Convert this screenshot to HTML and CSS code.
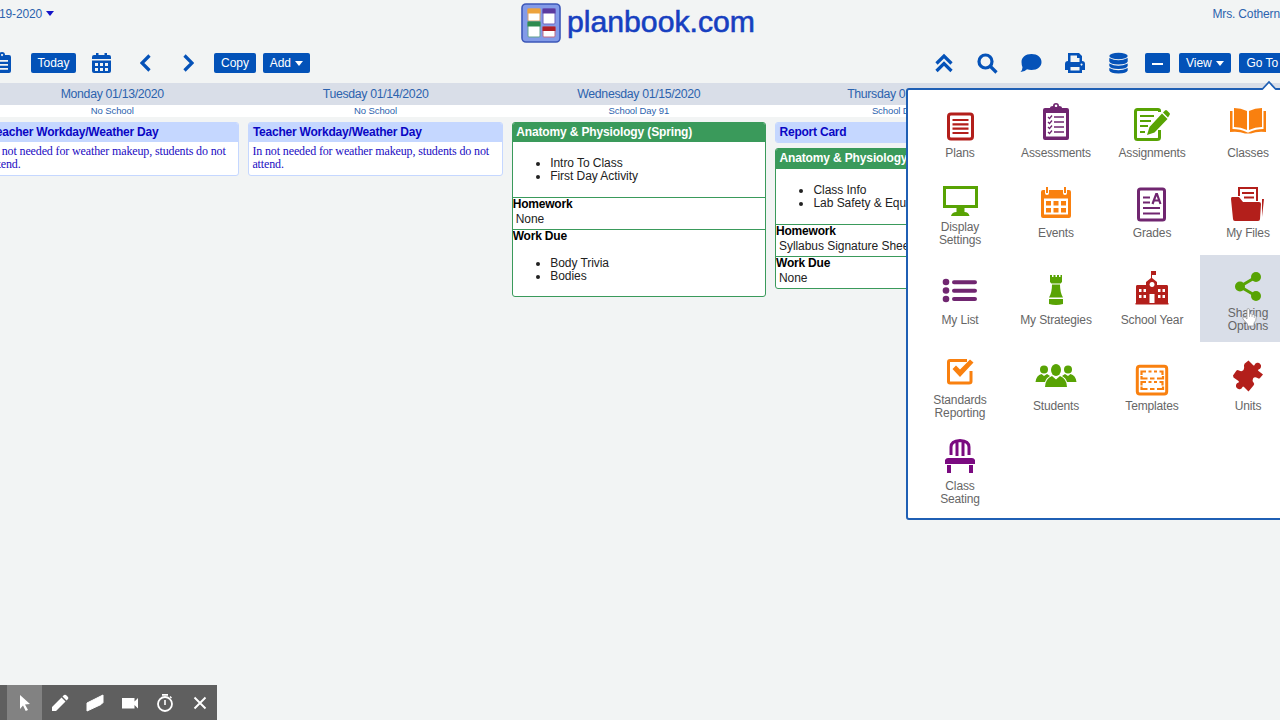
FILE: index.html
```html
<!DOCTYPE html>
<html lang="en">
<head>
    <meta charset="UTF-8">
    <meta name="viewport" content="width=device-width, initial-scale=1.0">
    <title>Planbook</title>
    <link rel="stylesheet" href="styles.css">
</head>
<body>
    <div class="page">
        <header class="header">
            <div class="year">2019-2020 <span class="caret"></span></div>
            <div class="logo">
                <svg width="40" height="40" viewBox="0 0 40 40">
                    <rect x="1" y="1" width="38" height="38" rx="4" fill="#839be8" stroke="#3d57b8" stroke-width="1.600"/>
                    <rect x="7" y="6" width="12" height="12" rx="1" fill="#fff" stroke="#d9a26a"/><path d="M6.500 5.500h13v5h-13z" fill="#eda33c"/>
                    <rect x="22" y="6" width="12" height="15" rx="1" fill="#fff" stroke="#7162bd"/><path d="M21.500 5.500h13v5h-13z" fill="#5b3aa0"/>
                    <rect x="7" y="19" width="12" height="15" rx="1" fill="#fff" stroke="#65a390"/><path d="M6.500 18.500h13v5h-13z" fill="#2f8c4f"/>
                    <rect x="22" y="24" width="12" height="10" rx="1" fill="#fff" stroke="#c56a83"/><path d="M21.500 23.500h13v4.500h-13z" fill="#b02027"/>
                </svg>
                <span class="logo-text">planbook.com</span>
            </div>
            <div class="user">Mrs. Cothern</div>
        </header>

        <nav class="toolbar">
            <svg class="tool clipboard" width="18" height="22" viewBox="0 0 18 22"><path fill-rule="evenodd" d="M2 3h4a3 3 0 0 1 6 0h4q2 0 2 2v14q0 2-2 2H2q-2 0-2-2V5q0-2 2-2zM9 2a1 1 0 1 0 .1 0zM4 8v1.700h11V8zM4 12v1.700h11V12zM4 16v1.700h11V16z"/></svg>
            <button class="btn today">Today</button>
            <svg class="tool calendar" width="19" height="22" viewBox="0 0 19 22"><path fill-rule="evenodd" d="M2 3h2V1h2.500v2h6V1H15v2h2q2 0 2 2v2H0V5q0-2 2-2zM0 8.500h19V19q0 2-2 2H2q-2 0-2-2zM3 11v3h3v-3zm5 0v3h3v-3zm5 0v3h3v-3zM3 16v3h3v-3zm5 0v3h3v-3zm5 0v3h3v-3z"/></svg>
            <svg class="tool prev" width="11" height="18" viewBox="0 0 11 18"><path class="line" d="M9.500 1.500L2 9l7.500 7.500"/></svg>
            <svg class="tool next" width="11" height="18" viewBox="0 0 11 18"><path class="line" d="M1.500 1.500L9 9l-7.500 7.500"/></svg>
            <button class="btn copy">Copy</button>
            <button class="btn add">Add <span class="caret"></span></button>

            <svg class="tool collapse" width="18" height="20" viewBox="0 0 18 20"><path class="line" d="M1.500 10.500L9 3l7.500 7.500M1.500 18L9 10.500l7.500 7.500"/></svg>
            <svg class="tool search" width="21" height="21" viewBox="0 0 21 21"><circle class="line" cx="8.500" cy="8.500" r="6.500"/><path class="line" d="M13.500 13.500l6 6"/></svg>
            <svg class="tool comment" width="22" height="20" viewBox="0 0 22 20"><path d="M11.500 1C17.500 1 21.500 4.500 21.500 9s-4 8-10 8q-2.500 0-4.500-.8Q4.500 19 .5 19q2-2.200 2-4.800Q1.500 12 1.500 9C1.500 4.500 5.500 1 11.500 1z"/></svg>
            <svg class="tool print" width="20" height="22" viewBox="0 0 20 22"><path fill-rule="evenodd" d="M3 1h11l3 3v5q3 0 3 3v6h-3v3H3v-3H0v-6q0-3 3-3zM5.500 3.500V10h9V6H12V3.500zM5.500 15v3.500h9V15zM16.500 11.500a1 1 0 1 0 .1 0z"/></svg>
            <svg class="tool database" width="19" height="22" viewBox="0 0 19 22"><ellipse cx="9.500" cy="4" rx="9.200" ry="3.300"/><path d="M.3 6q9 4.500 18.400 0v3.500q-1 3-9.200 3t-9.200-3zM.3 11.500q9 4.500 18.400 0V14q-1 3-9.200 3t-9.200-3zM.3 16q9 4.500 18.400 0v2.500q-1 3-9.200 3t-9.200-3z"/></svg>
            <button class="btn minus"><span class="dash"></span></button>
            <button class="btn view">View <span class="caret"></span></button>
            <button class="btn goto">Go To <span class="caret"></span></button>
        </nav>

        <main class="week">
            <section class="day">
                <h2 class="date">Monday 01/13/2020</h2>
                <p class="school-day">No School</p>
                <div class="cards">
                    <article class="card event">
                        <h3>Teacher Workday/Weather Day</h3>
                        <p>In not needed for weather makeup, students do not attend.</p>
                    </article>
                </div>
            </section>
            <section class="day">
                <h2 class="date">Tuesday 01/14/2020</h2>
                <p class="school-day">No School</p>
                <div class="cards">
                    <article class="card event">
                        <h3>Teacher Workday/Weather Day</h3>
                        <p>In not needed for weather makeup, students do not attend.</p>
                    </article>
                </div>
            </section>
            <section class="day">
                <h2 class="date">Wednesday 01/15/2020</h2>
                <p class="school-day">School Day 91</p>
                <div class="cards">
                    <article class="card lesson">
                        <h3>Anatomy &amp; Physiology (Spring)</h3>
                        <div class="part">
                            <ul><li>Intro To Class</li><li>First Day Activity</li></ul>
                        </div>
                        <div class="part">
                            <h4>Homework</h4>
                            <p>None</p>
                        </div>
                        <div class="part">
                            <h4>Work Due</h4>
                            <ul><li>Body Trivia</li><li>Bodies</li></ul>
                        </div>
                    </article>
                </div>
            </section>
            <section class="day">
                <h2 class="date">Thursday 01/16/2020</h2>
                <p class="school-day">School Day 92</p>
                <div class="cards">
                    <article class="card event">
                        <h3>Report Card</h3>
                    </article>
                    <article class="card lesson">
                        <h3>Anatomy &amp; Physiology (Spring)</h3>
                        <div class="part">
                            <ul><li>Class Info</li><li>Lab Safety &amp; Equipment</li></ul>
                        </div>
                        <div class="part">
                            <h4>Homework</h4>
                            <p>Syllabus Signature Sheet</p>
                        </div>
                        <div class="part">
                            <h4>Work Due</h4>
                            <p>None</p>
                        </div>
                    </article>
                </div>
            </section>
            <section class="day">
                <h2 class="date"></h2>
                <p class="school-day"></p>
            </section>
        </main>
    </div>

    <!-- Go To menu -->
    <div class="menu">
        <svg class="menu-arrow" width="16" height="11" viewBox="0 0 16 11"><path d="M1.500 9L8 2l6.500 7v2h-13z" fill="#fff"/><path d="M1 9.500L8 2l7 7.500" fill="none" stroke="#1f5fb4" stroke-width="1.800"/></svg>
        <a class="item red">
            <svg viewBox="0 0 36 36"><rect class="line" x="6.500" y="6" width="24" height="25" rx="2.500"/><path class="line thin" d="M10.500 12h16M10.500 16.300h16M10.500 20.600h16M10.500 25h16"/></svg>
            <span>Plans</span>
        </a>
        <a class="item purple">
            <svg viewBox="0 0 36 36"><path fill-rule="evenodd" d="M7 0h5q0-2 3-2 0-3 3-3t3 3q3 0 3 2h5q2 0 2 2v28q0 2-2 2H7q-2 0-2-2V2q0-2 2-2zM8 5v23.500h20V5zM18-3.500a1.300 1.300 0 1 0 .1 0z"/><path class="line fine" d="M16 9h10M16 14h10M16 19h10M16 24h10M10 9l1.500 1.500L14 7.500M10 14l1.500 1.500 2.500-3M10 19l1.500 1.500 2.500-3M10 24l1.500 1.500 2.500-3"/></svg>
            <span>Assessments</span>
        </a>
        <a class="item green">
            <svg viewBox="0 0 36 36"><path class="line" d="M25.500 4V2.500q0-1-1.500-1H3.500q-2 0-2 2v26q0 2 2 2H23q2.500 0 2.500-2V22"/><path class="line thin" d="M6 8h14M6 13h11M6 18h8M6 24h5"/><path d="M13 27l2.500-8L28 5.500l5.500 5.500-13 13.500zM29 4.500l2-2q1-1 2 0l2.500 2.500q1 1 0 2L34 9.500z"/></svg>
            <span>Assignments</span>
        </a>
        <a class="item orange">
            <svg viewBox="0 0 36 36"><path d="M4 0q7 0 13 3v19q-6-3-13-3zM32 0q-7 0-13 3v19q6-3 13-3zM0 3h2.500v18q8 0 14 3 1.500 1 3 0 6-3 14-3V3H36v21q-9-1-15 1.500h-6Q9 23 0 24z"/></svg>
            <span>Classes</span>
        </a>
        <a class="item green">
            <svg viewBox="0 0 36 36"><path fill-rule="evenodd" d="M1 4h35v22H1zM4 7v16h29V7zM14.500 26h8v4q4 0 5 4H9q1-4 5.500-4z"/></svg>
            <span>Display<br>Settings</span>
        </a>
        <a class="item orange">
            <svg viewBox="0 0 36 36"><path fill-rule="evenodd" d="M3 4q0-2 2-2h2v3q0 2 2 2t2-2V2h14v3q0 2 2 2t2-2V2h2q2 0 2 2v24q0 2-2 2H5q-2 0-2-2zM6 10.500v16h24v-16z"/><path d="M8-1h2v6H8zM26-1h2v6h-2zM8 13h5v4.500H8zm7.500 0h5v4.500h-5zm7.500 0h5v4.500h-5zM8 20h5v4.500H8zm7.500 0h5v4.500h-5zm7.500 0h5v4.500h-5z"/></svg>
            <span>Events</span>
        </a>
        <a class="item purple">
            <svg viewBox="0 0 36 36"><rect class="line" x="4.500" y="1" width="26" height="31" rx="2"/><path class="line thin" d="M9 9.500h7M9 14.500h7M9 20h17M9 25.500h17"/><path class="line thin" d="M18.500 16l3.700-10h.8l3.500 10M20 12.500h5"/></svg>
            <span>Grades</span>
        </a>
        <a class="item red">
            <svg viewBox="0 0 36 36"><path d="M2 9h7l4 5h16q2 0 2 2l-1 15q0 2-2 2H5q-2 0-2-2L1 11q0-2 1-2zM32 11h2l-2 18z"/><path d="M9 8V0h18v13M12 5h12M14 9.500h10" fill="none" stroke="#b31f1b" stroke-width="2"/></svg>
            <span>My Files</span>
        </a>
        <a class="item purple">
            <svg viewBox="0 0 36 36"><circle cx="4" cy="7" r="3.300"/><circle cx="4" cy="15.500" r="3.300"/><circle cx="4" cy="24" r="3.300"/><path class="line thick" d="M12 7.300h21M12 15.700h21M12 24h21"/></svg>
            <span>My List</span>
        </a>
        <a class="item green">
            <svg viewBox="0 0 36 36"><path d="M12 0h2v2h1.500V0h2v2H19V0h2v2h1.500V0H24v7l-1.500 1.500H13.500L12 7zM14 9.500h8q0 8 3 13H11q3-5 3-13zM11 24h14v5q-7 2-14 0z"/></svg>
            <span>My Strategies</span>
        </a>
        <a class="item red">
            <svg viewBox="0 0 36 36"><path fill-rule="evenodd" d="M17-4h5v4h-4v3l5 4v3h10q1 0 1 1.500V28H2V11.500Q2 10 3 10h9V7l5-4zM18 7a2.500 2.500 0 1 0 .1 0zM5 14v3h2.500v-3zm4.500 0v3H12v-3zM5 20v3h2.500v-3zm4.500 0v3H12v-3zm14.500-6v3h2.500v-3zm4.500 0v3H31v-3zM24 20v3h2.500v-3zm4.500 0v3H31v-3zM15.500 19v9h5v-9z"/><path d="M1.500 28h33v1.500h-33z"/></svg>
            <span>School Year</span>
        </a>
        <a class="item green active">
            <svg viewBox="0 0 36 36"><circle cx="26" cy="9" r="5"/><circle cx="10" cy="18.500" r="5"/><circle cx="26" cy="28" r="5"/><path class="line" d="M26 9L10 18.500 26 28"/></svg>
            <span>Sharing<br>Options</span>
        </a>
        <a class="item orange">
            <svg viewBox="0 0 36 36"><path class="line" d="M25 5.500H8Q6.500 5.500 6.500 7v19.500q0 1.500 1.500 1.500H27q2 0 2-1.500V16"/><path d="M10.500 14l3.500-3.500 4 4L28 4.500l3.500 3L18 22z"/></svg>
            <span>Standards<br>Reporting</span>
        </a>
        <a class="item green">
            <svg viewBox="0 0 36 36"><circle cx="6" cy="8.500" r="4"/><circle cx="30" cy="8.500" r="4"/><path d="M-2.500 21q1-7 6-8l2.500 2 3-2 3 2q-4 2-5 6zM38.500 21q-1-7-6-8L30 15l-3-2-3 2q4 2 5 6z"/><ellipse cx="18" cy="9" rx="5" ry="6"/><path d="M7 26q0-8 7-11l4 3.500 4-3.500q7 3 7 11z"/></svg>
            <span>Students</span>
        </a>
        <a class="item orange">
            <svg viewBox="0 0 36 36"><rect x="3.300" y="5.300" width="29.400" height="27.600" rx="2.500" class="line"/><path d="M7.500 14v-3.500h4.500m2.500 0h3m2.500 0h3m2.500 0h3V14M7.500 15v2.500h6m2.500 0h4.500m2.500 0h6V15M7.500 24.500V21h4.500m2.500 0h3m2.500 0h3m2.500 0h3v3.500M7.500 25.500V28h6m2.500 0h4.500m2.500 0h6v-2.500" class="line thin"/></svg>
            <span>Templates</span>
        </a>
        <a class="item red">
            <svg viewBox="0 0 36 36"><path d="M14 4.500q0-2 2-3L18.500-.5 23 4q1 1 1.500 0a3.400 3.400 0 1 1 4 4.500q-1 .5 0 1.500l4.500 3.500-3 3.500q-1 1-2.500 0-3-1.500-4.500.5-1 2 .5 4 1.500 1.500 0 3l-5 6-4.500-4.500q-1-1-1.500 0a3.400 3.400 0 1 1-4-4.500q1-.5 0-1.500L3.500 16.500 3 14.500l3.500-5q1-1 2.500 0 3 1.500 4.500-.5 1-2 .5-4.500z"/></svg>
            <span>Units</span>
        </a>
        <a class="item violet">
            <svg viewBox="0 0 36 36"><path class="line" d="M9 14V6q0-6 9-6.500Q27 0 27 6v8M15 1v14M21 1v14"/><path d="M6 17h24q2 0 3 2v4H3v-4q1-2 3-2zM5 24h4v8H5zM27 24h4v8h-4z"/></svg>
            <span>Class<br>Seating</span>
        </a>
    </div>

    <svg class="hand" width="15" height="19" viewBox="0 0 15 19"><path d="M5 9V2q0-1.500 1.200-1.500T7.500 2v4q2-1 2.500.7 2-.7 2.300.8 2-.5 2 1.500 0 4-2.300 6v3H5.500v-2L1 11q-1-2 1-2 1 0 3 2z" fill="#fff" stroke="#999" stroke-width=".8"/><path d="M7.500 6v3M10 7v2M12.300 8v2" stroke="#999" stroke-width=".7"/></svg>

    <!-- Recorder controls -->
    <div class="recorder">
        <span class="rec-btn selected"><svg viewBox="0 0 20 20"><path d="M5 2l10 9-5 .5 3 5.500-2.300 1-2.700-5.500L5 16z"/></svg></span>
        <span class="rec-btn"><svg viewBox="0 0 20 20"><path d="M2 18v-4L11.500 4.500l4 4L6 18zM12.500 3.500l1.500-1.500q1-.7 2 0l2 2q.7 1 0 2L16.500 7.500z"/></svg></span>
        <span class="rec-btn"><svg viewBox="0 0 20 20"><path d="M2 10L18 2v7.500L16 11.500 2 18z" stroke="#fff" stroke-linejoin="round"/></svg></span>
        <span class="rec-btn"><svg viewBox="0 0 20 20"><path d="M2 5h12.500v3.500L18 5v10.500L14.500 12v3.500H2z"/></svg></span>
        <span class="rec-btn"><svg viewBox="0 0 20 20"><circle cx="10" cy="11" r="7" fill="none" stroke="#fff" stroke-width="1.800"/><path d="M7 1h6v1.800H7zM9.200 7h1.600v5H9.200zM14.500 4l1-1 1.500 1.500-1 1z"/></svg></span>
        <span class="rec-btn"><svg viewBox="0 0 20 20"><path d="M4.500 4.500l11 11M15.500 4.500l-11 11" stroke="#fff" stroke-width="1.900"/></svg></span>
    </div>
</body>
</html>
```
FILE: styles.css
```css
* {
    margin: 0;
    padding: 0;
    box-sizing: border-box;
}

body {
    height: 720px;
    overflow: hidden;
    position: relative;
    background: #f2f4f4;
    font-family: 'Liberation Sans', Arial, sans-serif;
    font-size: 12px;
    line-height: 13px;
    color: #222;
}

/* the page is scrolled a little to the right */
.page {
    width: 1318px;
    margin-left: -20px;
}

.header {
    height: 46px;
    display: grid;
    grid-template-columns: 1fr 236px 1fr;
    color: #2c63ae;
}

.year {
    padding: 8px 0 0 6px;
    letter-spacing: -0.15px;
}

.year .caret {
    margin-left: 1px;
}

.user {
    padding: 8px 18px 0 0;
    text-align: right;
    letter-spacing: -0.15px;
}

.logo {
    display: flex;
    align-items: flex-start;
    gap: 6px;
    padding-top: 3px;
}

.logo svg {
    flex: none;
}

.logo-text {
    font-size: 30.2px;
    line-height: 37px;
    color: #173fc0;
    -webkit-text-stroke: 0.6px #173fc0;
}

.caret {
    display: inline-block;
    border: 4px solid transparent;
    border-top: 5px solid #1414c8;
    border-bottom: 0;
    vertical-align: 2px;
}

.toolbar {
    display: flex;
    align-items: center;
    height: 37px;
    padding: 0 0 3px 13px;
}

.tool {
    flex: none;
    fill: #0552b8;
}

.tool .line {
    fill: none;
    stroke: #0552b8;
    stroke-width: 3.2;
}

.btn {
    flex: none;
    height: 20px;
    border: 0;
    border-radius: 2px;
    background: #0352b8;
    color: #fff;
    font: 12px/20px 'Liberation Sans', Arial, sans-serif;
    white-space: nowrap;
}

.btn .caret {
    border-top-color: #fff;
    vertical-align: 1px;
    margin-left: 1px;
}

.today { width: 45px; margin-left: 20px; }
.calendar { margin-left: 16px; }
.prev { margin-left: 29px; }
.next { margin-left: 32px; }
.copy { width: 42px; margin-left: 20px; }
.add { width: 47px; margin-left: 7px; }
.collapse { margin-left: 625px; }
.search { margin-left: 24px; }
.comment { margin-left: 22px; }
.print { margin-left: 23px; }
.database { margin-left: 24px; }
.minus { width: 25px; margin-left: 17px; }
.view { width: 52px; margin-left: 9px; }
.goto { width: 59px; margin-left: 8px; }

.dash {
    display: block;
    width: 11px;
    height: 2px;
    margin: 1px auto 0;
    background: #fff;
}

.week {
    display: grid;
    grid-template-columns: repeat(5, 263.3px);
    margin-left: 0.6px;
}

.date {
    height: 22px;
    background: #d9dee8;
    color: #2c63ae;
    font-size: 12.3px;
    font-weight: normal;
    letter-spacing: -0.33px;
    line-height: 23px;
    text-align: center;
}

.school-day {
    height: 12px;
    background: #fff;
    color: #2c63ae;
    font-size: 9.5px;
    line-height: 12px;
    letter-spacing: -0.1px;
    text-align: center;
}

.cards {
    display: flex;
    flex-direction: column;
    gap: 5px;
    padding: 4.5px 4.5px;
}

.card {
    border: 1px solid #c5d7ff;
    border-radius: 3px;
    background: #fff;
    overflow: hidden;
}

.card h3 {
    height: 19.5px;
    padding-left: 3.5px;
    font-size: 12px;
    line-height: 18px;
    letter-spacing: -0.14px;
    white-space: nowrap;
}

.event h3 {
    background: #c5d7ff;
    color: #0a06c4;
    letter-spacing: -0.22px;
}

.event p {
    height: 33px;
    padding: 3px 3px 0;
    font-family: 'Liberation Serif', 'Times New Roman', serif;
    letter-spacing: -0.13px;
    color: #1b0cc2;
}

.lesson {
    border-color: #3a9a5b;
}

.lesson h3 {
    background: #3a9a5b;
    color: #fff;
}

.part {
    letter-spacing: -0.05px;
}

.part + .part {
    border-top: 1px solid #3a9a5b;
}

.part ul {
    padding: 15px 0 14px 37.5px;
}

.part h4 {
    font-size: 12px;
    letter-spacing: -0.2px;
    color: #000;
}

.part h4 + ul {
    padding: 14px 0 13px 37.5px;
}

.part p {
    height: 18px;
    padding: 2px 0 0 3px;
    white-space: nowrap;
}

.menu {
    position: absolute;
    left: 906px;
    top: 88px;
    width: 394px;
    height: 432px;
    padding: 3.5px 4px 0;
    display: grid;
    grid-template-columns: repeat(4, 96px);
    grid-template-rows: 75px repeat(4, 86.5px);
    background: #fff;
    border: 2px solid #1f5fb4;
    border-radius: 3px;
}

.menu-arrow {
    position: absolute;
    left: 353px;
    top: -10px;
}

.item {
    display: flex;
    flex-direction: column;
    align-items: center;
    justify-content: center;
    gap: 3px;
    padding-top: 5px;
    color: #666;
    letter-spacing: -0.14px;
    text-align: center;
}

.item.active {
    background: #d9dee8;
}

.item svg {
    flex: none;
    width: 36px;
    height: 36px;
    overflow: visible;
    fill: var(--icon);
}

.item span {
    white-space: nowrap;
}

.item .line {
    fill: none;
    stroke: var(--icon);
    stroke-width: 3;
}

.item .thin { stroke-width: 2.2; }
.item .fine { stroke-width: 1.3; }
.item .thick { stroke-width: 4; stroke-linecap: round; }

.red { --icon: #b31f1b; }
.purple { --icon: #702670; }
.violet { --icon: #7a0a80; }
.green { --icon: #58a304; }
.orange { --icon: #f9800f; }

.hand {
    position: absolute;
    left: 1242px;
    top: 308px;
}

.recorder {
    position: absolute;
    left: 0;
    bottom: 0;
    width: 217px;
    height: 35px;
    padding-left: 7px;
    display: flex;
    background: #5f5f5f;
}

.rec-btn {
    width: 35px;
    display: flex;
    align-items: center;
    justify-content: center;
}

.rec-btn.selected {
    background: #828282;
}

.rec-btn svg {
    width: 20px;
    height: 20px;
    fill: #fff;
}
```
